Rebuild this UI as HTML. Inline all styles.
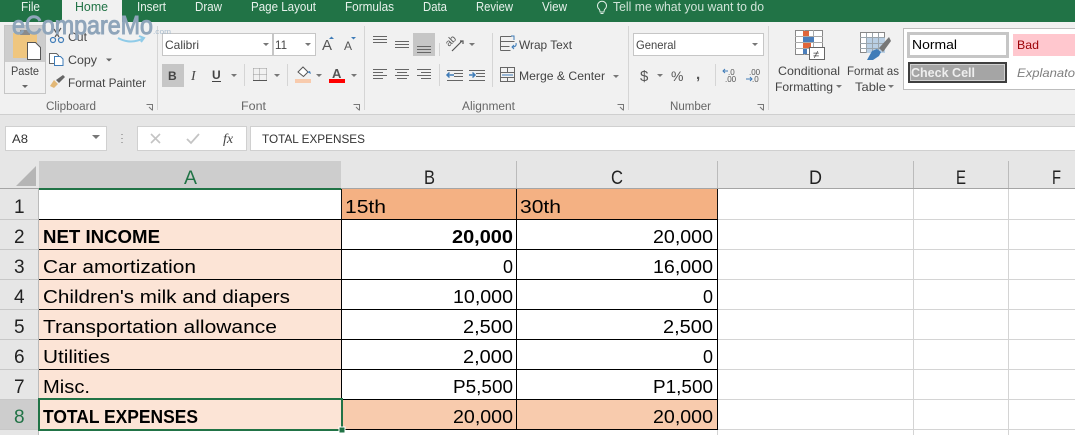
<!DOCTYPE html>
<html><head><meta charset="utf-8"><style>
html,body{margin:0;padding:0;background:#fff;width:1075px;height:435px;overflow:hidden}
svg{display:block}
text{font-family:"Liberation Sans",sans-serif}
.t{font-size:12.500px;fill:#e8f2ec}
.r{font-size:12px;fill:#444}
.g{font-size:11.500px;fill:#666}
.c{font-size:18.500px;fill:#000}
.h{font-size:19px;fill:#222}
</style></head><body>
<svg width="1075" height="435" viewBox="0 0 1075 435" xmlns="http://www.w3.org/2000/svg">
<rect width="1075" height="435" fill="#fff"/>
<rect width="1075" height="22" fill="#217346"/>
<rect y="22" width="1075" height="92" fill="#f1f1f1"/>
<rect x="62" width="60" height="22" fill="#f1f1f1"/>
<rect y="114" width="1075" height="47" fill="#e6e6e6"/>
<rect y="114" width="1075" height="1" fill="#cfcfcf"/>
<text class="t" x="21" y="11" textLength="19" lengthAdjust="spacingAndGlyphs">File</text>
<text class="t" x="75" y="11" textLength="33" lengthAdjust="spacingAndGlyphs" style="fill:#217346">Home</text>
<text class="t" x="137" y="11" textLength="29" lengthAdjust="spacingAndGlyphs">Insert</text>
<text class="t" x="195" y="11" textLength="27" lengthAdjust="spacingAndGlyphs">Draw</text>
<text class="t" x="251" y="11" textLength="65" lengthAdjust="spacingAndGlyphs">Page Layout</text>
<text class="t" x="345" y="11" textLength="49" lengthAdjust="spacingAndGlyphs">Formulas</text>
<text class="t" x="423" y="11" textLength="24" lengthAdjust="spacingAndGlyphs">Data</text>
<text class="t" x="476" y="11" textLength="37" lengthAdjust="spacingAndGlyphs">Review</text>
<text class="t" x="542" y="11" textLength="25" lengthAdjust="spacingAndGlyphs">View</text>
<text class="t" x="613" y="11" textLength="151" lengthAdjust="spacingAndGlyphs" style="fill:#cfe3d7">Tell me what you want to do</text>
<path d="M599.500 9.500a4.500 4.500 0 1 1 5 0l-.6 2.500h-3.800zM600.500 13.500h3" fill="none" stroke="#dfeee5" stroke-width="1"/>

<!-- Clipboard -->
<rect x="4.500" y="25.500" width="41" height="68" fill="#f1f1f1" stroke="#c6c6c6"/>
<rect x="5" y="26" width="40" height="36" fill="#cdcdcd"/>
<rect x="13" y="33" width="24" height="25" fill="#efc67f"/>
<rect x="20" y="30" width="10" height="5" fill="#8b8b8b"/>
<path d="M27.500 42.500h8l5 5v12h-13z" fill="#fff" stroke="#555"/>
<text class="r" x="11" y="75" textLength="28" lengthAdjust="spacingAndGlyphs">Paste</text>
<path d="M22 85h6l-3 3z" fill="#666"/>
<text class="r" x="68" y="41" textLength="19" lengthAdjust="spacingAndGlyphs">Cut</text>
<g fill="none" stroke="#3f7cb8" stroke-width="1.200"><circle cx="53" cy="40" r="2.500"/><circle cx="61" cy="40" r="2.500"/></g>
<path d="M55 37l6-9M59 37l-5-8" stroke="#555" stroke-width="1.200" fill="none"/>
<text class="r" x="68" y="64" textLength="29" lengthAdjust="spacingAndGlyphs">Copy</text>
<path d="M106 58.500h6l-3 3z" fill="#666"/>
<path d="M49.500 53.500h7l2 2v8h-9z" fill="#fff" stroke="#666"/>
<path d="M54.500 56.500h6l2.500 2.500v6.500h-8.500z" fill="#fff" stroke="#3f7cb8"/>
<text class="r" x="68" y="87" textLength="78" lengthAdjust="spacingAndGlyphs">Format Painter</text>
<path d="M50 86l4-6 4 4-4 4z" fill="#e3b877"/><path d="M56 80l7-5 2 2-6 6z" fill="#666"/>
<text class="g" x="46" y="110" textLength="50" lengthAdjust="spacingAndGlyphs">Clipboard</text>
<path d="M146.500 104.500h6v6M149 107l3 3" fill="none" stroke="#777"/>
<rect x="157" y="26" width="1" height="84" fill="#d5d5d5"/>

<!-- Font -->
<rect x="162.500" y="33.500" width="110" height="22" fill="#fff" stroke="#c6c6c6"/>
<rect x="273.500" y="33.500" width="42" height="22" fill="#fff" stroke="#c6c6c6"/>
<text class="r" x="165" y="49" textLength="34" lengthAdjust="spacingAndGlyphs">Calibri</text>
<text class="r" x="275" y="49" textLength="12" lengthAdjust="spacingAndGlyphs">11</text>
<path d="M263 43h6l-3 3zM305 43h6l-3 3z" fill="#777"/>
<text x="322" y="50" font-size="15" fill="#555">A</text><path d="M329 39h5l-2.500-2.500z" fill="#3f7cb8"/>
<text x="344" y="50" font-size="12" fill="#555">A</text><path d="M351 37h5l-2.500 2.500z" fill="#3f7cb8"/>
<rect x="162" y="64" width="22" height="23" fill="#c6c6c6"/>
<text x="168" y="80" font-size="12" font-weight="bold" fill="#444">B</text>
<text x="191" y="80" font-size="14" font-style="italic" style="font-family:'Liberation Serif',serif" fill="#444">I</text>
<text x="212" y="79" font-size="12" font-weight="bold" fill="#444">U</text>
<rect x="212" y="81" width="9" height="1" fill="#444"/>
<path d="M231 74h6l-3 3zM274 74h6l-3 3zM316 74h6l-3 3zM351 74h6l-3 3z" fill="#777"/>
<rect x="244" y="64" width="1" height="22" fill="#d5d5d5"/><rect x="287" y="64" width="1" height="22" fill="#d5d5d5"/>
<path d="M253.500 68.500h13M253.500 74.500h13M253.500 68.500v12M259.500 68.500v12M266.500 68.500v12" fill="none" stroke="#999" stroke-dasharray="1 1"/>
<rect x="253" y="80" width="14" height="1" fill="#555"/>
<path d="M298 72l5-5 5 5-4.500 4.500z" fill="#fff" stroke="#555"/><path d="M307 72l3-1 1 3z" fill="#3f7cb8"/>
<rect x="295" y="79" width="16" height="4" fill="#f8cbad"/>
<text x="332" y="78" font-size="13" font-weight="bold" fill="#555">A</text>
<rect x="329" y="79" width="16" height="4" fill="#f00"/>
<text class="g" x="241" y="110" textLength="25" lengthAdjust="spacingAndGlyphs">Font</text>
<path d="M353.500 104.500h6v6M356 107l3 3" fill="none" stroke="#777"/>
<rect x="364" y="26" width="1" height="84" fill="#d5d5d5"/>

<!-- Alignment -->
<rect x="413" y="33" width="22" height="23" fill="#c6c6c6"/>
<path d="M373 36.500h14M373 39.500h14M373 42.500h14M395 41.500h14M395 44.500h14M395 47.500h14M417 46.500h14M417 49.500h14M417 52.500h14" stroke="#666"/>
<path d="M373 69.500h14M373 72.500h10M373 75.500h14M373 78.500h10M395 69.500h14M397 72.500h10M395 75.500h14M397 78.500h10M417 69.500h14M421 72.500h10M417 75.500h14M421 78.500h10" stroke="#666"/>
<rect x="439" y="43" width="1" height="13" fill="#d5d5d5"/><rect x="439" y="64" width="1" height="22" fill="#d5d5d5"/><rect x="492" y="33" width="1" height="54" fill="#d5d5d5"/>
<text x="449" y="47" font-size="10" fill="#555" transform="rotate(-45 449 47)">ab</text>
<path d="M452 51l10-10M460 41h3v3" stroke="#555" stroke-width="1.200" fill="none"/>
<path d="M469 43h6l-3 3z" fill="#777"/>
<path d="M447 70.500h16M454 73.500h9M454 76.500h9M447 80.500h16M469 70.500h16M476 73.500h9M476 76.500h9M469 80.500h16" stroke="#666"/>
<path d="M447 75h7M449.500 72.500l-2.500 2.500 2.500 2.500M469 75h6M472.500 72.500l2.500 2.500-2.500 2.500" stroke="#3f7cb8" stroke-width="1.500" fill="none"/>
<path d="M500.500 36.500h11M500.500 41.500h14M500.500 46.500h9M500.500 50.500h10M500.500 36.500v14" stroke="#666" fill="none"/>
<path d="M511 36h3v4M516 43q1 4-4 4M514 45l-2 2 2 2" stroke="#3f7cb8" fill="none"/>
<text class="r" x="519" y="49" textLength="53" lengthAdjust="spacingAndGlyphs">Wrap Text</text>
<rect x="500.500" y="67.500" width="14" height="14" fill="none" stroke="#666"/>
<path d="M500 72.500h15M500 77.500h15M507.500 68v4M507.500 78v4" stroke="#666"/>
<path d="M502 75h11" stroke="#3f7cb8"/>
<text class="r" x="519" y="80" textLength="86" lengthAdjust="spacingAndGlyphs">Merge &amp; Center</text>
<path d="M613 75h6l-3 3z" fill="#777"/>
<text class="g" x="462" y="110" textLength="53" lengthAdjust="spacingAndGlyphs">Alignment</text>
<path d="M617.500 104.500h6v6M620 107l3 3" fill="none" stroke="#777"/>
<rect x="628" y="26" width="1" height="84" fill="#d5d5d5"/>

<!-- Number -->
<rect x="633.500" y="33.500" width="130" height="22" fill="#fff" stroke="#c6c6c6"/>
<text class="r" x="636" y="49" textLength="40" lengthAdjust="spacingAndGlyphs">General</text>
<path d="M752 43h6l-3 3z" fill="#777"/>
<text x="640" y="81" font-size="15" fill="#555">$</text>
<path d="M657 74h6l-3 3z" fill="#777"/>
<text x="671" y="81" font-size="14" fill="#555">%</text>
<text x="696" y="79" font-size="15" font-weight="bold" fill="#555">,</text>
<rect x="715" y="64" width="1" height="22" fill="#d5d5d5"/>
<text x="728" y="75" font-size="8" fill="#555">.0</text><text x="725" y="82" font-size="8" fill="#555">.00</text>
<text x="749" y="75" font-size="8" fill="#555">.00</text><text x="752" y="82" font-size="8" fill="#555">.0</text>
<path d="M723 71h5M725 69l-2 2 2 2M746 79h6M750 77l2 2-2 2" stroke="#3f7cb8" fill="none"/>
<text class="g" x="670" y="110" textLength="41" lengthAdjust="spacingAndGlyphs">Number</text>
<path d="M757.500 104.500h6v6M760 107l3 3" fill="none" stroke="#777"/>
<rect x="768" y="26" width="1" height="84" fill="#d5d5d5"/>

<!-- Styles -->
<rect x="795.500" y="30.500" width="27" height="24" fill="#fff" stroke="#888"/>
<path d="M795 36.500h28M795 42.500h28M795 48.500h28M804.500 30v25M813.500 30v25" stroke="#aaa"/>
<rect x="803" y="31" width="6" height="5" fill="#e0663b"/><rect x="803" y="37" width="11" height="5" fill="#4a7ebb"/><rect x="803" y="43" width="8" height="5" fill="#e0663b"/><rect x="803" y="49" width="4" height="5" fill="#4a7ebb"/>
<rect x="809.500" y="47.500" width="15" height="12" fill="#fff" stroke="#666"/>
<text x="813" y="58" font-size="11" fill="#444">≠</text>
<text class="r" x="778" y="75" textLength="62" lengthAdjust="spacingAndGlyphs">Conditional</text>
<text class="r" x="775" y="91" textLength="58" lengthAdjust="spacingAndGlyphs">Formatting</text>
<path d="M836 85h6l-3 3z" fill="#777"/>
<rect x="860.500" y="32.500" width="24" height="20" fill="#fff" stroke="#888"/>
<rect x="866" y="38" width="19" height="15" fill="#b9cfe4"/>
<path d="M860 37.500h25M860 43.500h25M860 48.500h25M866.500 33v20M872.500 33v20M878.500 33v20" stroke="#9aa5ad"/>
<path d="M867 60l5-9 5-2 4 3-2 4-6 4z" fill="#3f7cb8"/><path d="M879 48l10-11 2 4-8 11z" fill="#777"/>
<text class="r" x="847" y="75" textLength="52" lengthAdjust="spacingAndGlyphs">Format as</text>
<text class="r" x="855" y="91" textLength="31" lengthAdjust="spacingAndGlyphs">Table</text>
<path d="M888 85h6l-3 3z" fill="#777"/>
<rect x="903.500" y="28.500" width="175" height="61" fill="#fff" stroke="#bdbdbd"/>
<rect x="908.500" y="33.500" width="99" height="23" fill="#fff" stroke="#c6c6c6" stroke-width="3"/>
<text x="912" y="49" font-size="13" fill="#000" textLength="45" lengthAdjust="spacingAndGlyphs">Normal</text>
<rect x="1013" y="34" width="62" height="22" fill="#ffc7ce"/>
<text x="1017" y="49" font-size="12" fill="#9c0006" textLength="22" lengthAdjust="spacingAndGlyphs">Bad</text>
<rect x="909" y="63" width="97" height="19" fill="#a5a5a5" stroke="#3f3f3f" stroke-width="2"/>
<rect x="910.500" y="64.500" width="94" height="16" fill="none" stroke="#eee" stroke-width=".6"/>
<text x="911" y="77" font-size="12.500" font-weight="bold" fill="#eee" textLength="64" lengthAdjust="spacingAndGlyphs">Check Cell</text>
<text x="1017" y="77" font-size="12" font-style="italic" fill="#7f7f7f" textLength="58" lengthAdjust="spacingAndGlyphs">Explanato</text>

<!-- Formula bar -->
<rect x="5.500" y="126.500" width="101" height="24" fill="#fff" stroke="#d0d0d0"/>
<text x="12" y="143" font-size="12" fill="#333" textLength="16" lengthAdjust="spacingAndGlyphs">A8</text>
<path d="M92 135h8l-4 4z" fill="#777"/>
<path d="M122 134v1M122 138v1M122 142v1" stroke="#999" stroke-width="1.500"/>
<rect x="137.500" y="126.500" width="109" height="24" fill="#fff" stroke="#d0d0d0"/>
<path d="M151 134l9 9M160 134l-9 9" stroke="#c4c4c4" stroke-width="1.600"/>
<path d="M187 139l4 4 8-9" stroke="#c4c4c4" stroke-width="1.800" fill="none"/>
<text x="223" y="143" font-size="14" font-style="italic" style="font-family:'Liberation Serif',serif" fill="#444">fx</text>
<rect x="250.500" y="126.500" width="830" height="24" fill="#fff" stroke="#d0d0d0"/>
<text x="262" y="143" font-size="12" fill="#333" textLength="103" lengthAdjust="spacingAndGlyphs">TOTAL EXPENSES</text>

<!-- Headers -->
<rect y="161" width="1075" height="28" fill="#e6e6e6"/>
<rect y="189" width="39" height="246" fill="#e6e6e6"/>
<path d="M16 186l20-20v20z" fill="#b5b5b5"/>
<rect x="39" y="161" width="302" height="28" fill="#cdcdcd"/>
<rect x="0" y="399" width="39" height="31" fill="#cdcdcd"/>
<path d="M516.500 161v28M717.500 161v28M913.500 161v28M1008.500 161v28" stroke="#bbb"/>
<rect y="188" width="1075" height="1" fill="#a5a5a5"/>
<rect x="39" y="188" width="302" height="2" fill="#217346"/>
<path d="M0 219.500h39M0 249.500h39M0 279.500h39M0 309.500h39M0 339.500h39M0 369.500h39M0 399.500h39M0 429.500h39" stroke="#c8c8c8"/>
<rect x="38" y="189" width="1" height="246" fill="#bbb"/>
<text class="h" x="184" y="184" textLength="13" lengthAdjust="spacingAndGlyphs" style="fill:#217346">A</text>
<text class="h" x="424" y="184" textLength="11" lengthAdjust="spacingAndGlyphs">B</text>
<text class="h" x="611" y="184" textLength="12" lengthAdjust="spacingAndGlyphs">C</text>
<text class="h" x="809" y="184" textLength="13" lengthAdjust="spacingAndGlyphs">D</text>
<text class="h" x="956" y="184" textLength="10" lengthAdjust="spacingAndGlyphs">E</text>
<text class="h" x="1052" y="184" textLength="9" lengthAdjust="spacingAndGlyphs">F</text>
<text class="h" x="14" y="213">1</text><text class="h" x="14" y="243">2</text><text class="h" x="14" y="273">3</text><text class="h" x="14" y="303">4</text><text class="h" x="14" y="333">5</text><text class="h" x="14" y="363">6</text><text class="h" x="14" y="393">7</text>
<text class="h" x="14" y="423" style="fill:#217346">8</text>

<!-- Cells -->
<rect x="39" y="219" width="302" height="211" fill="#fce4d6"/>
<rect x="341" y="399" width="376" height="31" fill="#f8cbad"/>
<path d="M913.500 189v246M1008.500 189v246M717 219.500h358M717 249.500h358M717 279.500h358M717 309.500h358M717 339.500h358M717 369.500h358M717 399.500h358M717 429.500h358M717.500 430v5" stroke="#d4d4d4"/>
<path d="M39 219.500h678M39 249.500h678M39 279.500h678M39 309.500h678M39 339.500h678M39 369.500h678M39 399.500h678M341.500 219v211M516.500 219v211M717.500 219v211M39 429.500h679" stroke="#000" stroke-width="1"/>
<rect x="341" y="189" width="376" height="30" fill="#f4b183"/>
<path d="M341.500 189v30M516.500 189v30M717.500 189v30" stroke="#111" stroke-width="1"/>
<text class="c" x="345" y="213" textLength="41" lengthAdjust="spacingAndGlyphs">15th</text>
<text class="c" x="520" y="213" textLength="41" lengthAdjust="spacingAndGlyphs">30th</text>
<text class="c" x="43" y="243" textLength="117" lengthAdjust="spacingAndGlyphs" font-weight="bold">NET INCOME</text>
<text class="c" x="43" y="273" textLength="153" lengthAdjust="spacingAndGlyphs">Car amortization</text>
<text class="c" x="43" y="303" textLength="247" lengthAdjust="spacingAndGlyphs">Children's milk and diapers</text>
<text class="c" x="43" y="333" textLength="234" lengthAdjust="spacingAndGlyphs">Transportation allowance</text>
<text class="c" x="43" y="363" textLength="67" lengthAdjust="spacingAndGlyphs">Utilities</text>
<text class="c" x="43" y="393" textLength="47" lengthAdjust="spacingAndGlyphs">Misc.</text>
<text class="c" x="43" y="423" textLength="155" lengthAdjust="spacingAndGlyphs" font-weight="bold">TOTAL EXPENSES</text>
<text class="c" x="452" y="243" textLength="61" lengthAdjust="spacingAndGlyphs" font-weight="bold">20,000</text>
<text class="c" x="653" y="243" textLength="60" lengthAdjust="spacingAndGlyphs">20,000</text>
<text class="c" x="503" y="273" textLength="10" lengthAdjust="spacingAndGlyphs">0</text>
<text class="c" x="653" y="273" textLength="60" lengthAdjust="spacingAndGlyphs">16,000</text>
<text class="c" x="453" y="303" textLength="60" lengthAdjust="spacingAndGlyphs">10,000</text>
<text class="c" x="703" y="303" textLength="10" lengthAdjust="spacingAndGlyphs">0</text>
<text class="c" x="463" y="333" textLength="50" lengthAdjust="spacingAndGlyphs">2,500</text>
<text class="c" x="663" y="333" textLength="50" lengthAdjust="spacingAndGlyphs">2,500</text>
<text class="c" x="463" y="363" textLength="50" lengthAdjust="spacingAndGlyphs">2,000</text>
<text class="c" x="703" y="363" textLength="10" lengthAdjust="spacingAndGlyphs">0</text>
<text class="c" x="453" y="393" textLength="60" lengthAdjust="spacingAndGlyphs">P5,500</text>
<text class="c" x="653" y="393" textLength="60" lengthAdjust="spacingAndGlyphs">P1,500</text>
<text class="c" x="453" y="423" textLength="60" lengthAdjust="spacingAndGlyphs">20,000</text>
<text class="c" x="653" y="423" textLength="60" lengthAdjust="spacingAndGlyphs">20,000</text>

<!-- Selection -->
<rect x="39" y="399" width="303" height="31" fill="none" stroke="#217346" stroke-width="2"/>
<rect x="339" y="427" width="6" height="6" fill="#217346" stroke="#fff"/>

<!-- Watermark -->
<text x="12" y="34" font-size="26" fill="#8fa5ba" stroke="#8fa5ba" stroke-width="1" textLength="141" lengthAdjust="spacingAndGlyphs">eCompareMo</text>
<text x="153" y="34" font-size="7.500" fill="#a8bccd" textLength="18" lengthAdjust="spacingAndGlyphs">.com</text>
<path d="M118 38q13 7 26 0M139 36l5 2-3 4" fill="none" stroke="#8fcbe8" stroke-width="2"/>
</svg>
</body></html>
